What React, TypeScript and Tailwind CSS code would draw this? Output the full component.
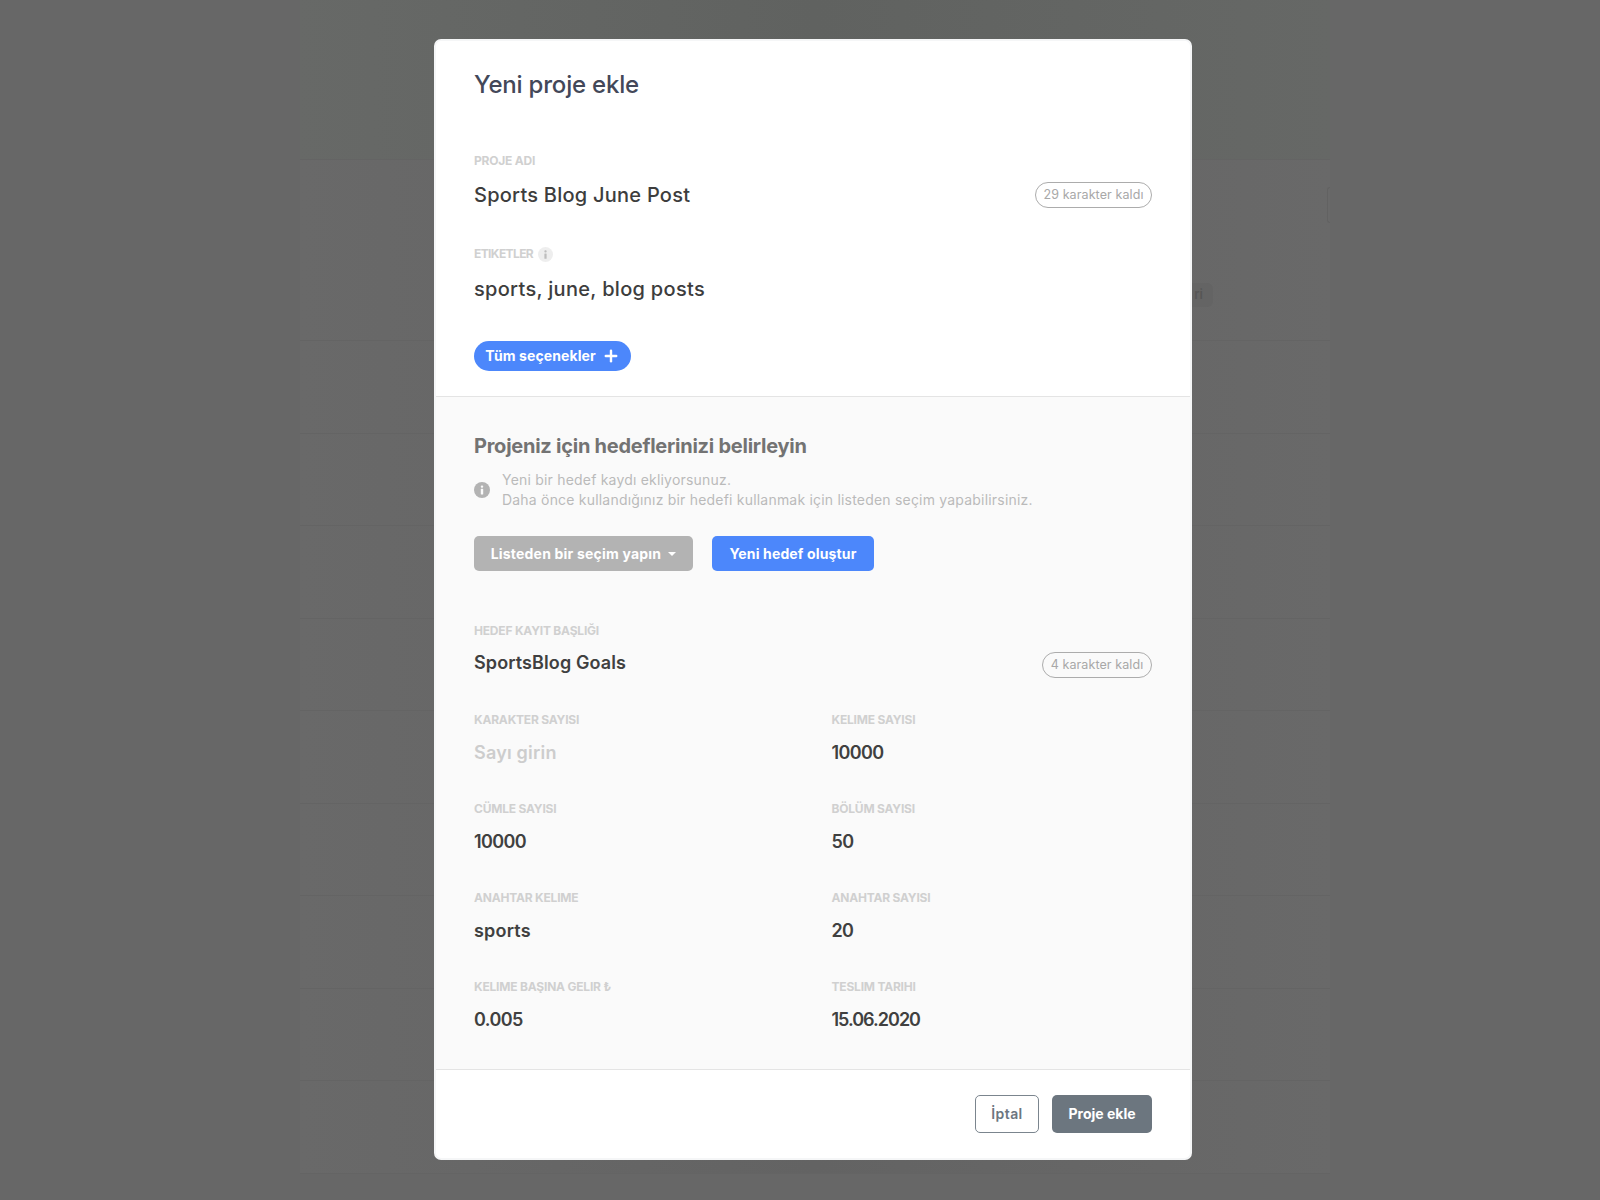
import { Plus } from "lucide-react";

const FONT = "font-['Inter','Noto_Sans',sans-serif]";
const LABEL = "h-4 text-[12px] leading-4 font-bold uppercase tracking-[-0.2px] text-[#d0d0d0]";
const VALUE = "h-[26px] text-[18px] leading-[26px] font-semibold text-[#404040]";

const GOALS = [
  { label: "Karakter sayısı", value: "Sayı girin", tone: "tracking-[0.2px] text-[#cdcdcd]" },
  { label: "Kelime sayısı", value: "10000", tone: "tracking-[-0.6px]" },
  { label: "Cümle sayısı", value: "10000", tone: "tracking-[-0.6px]" },
  { label: "Bölüm sayısı", value: "50", tone: "tracking-[-0.6px]" },
  { label: "Anahtar kelime", value: "sports", tone: "tracking-[0.2px]" },
  { label: "Anahtar sayısı", value: "20", tone: "tracking-[-0.6px]" },
  { label: "Kelime başına gelir ₺", value: "0.005", tone: "tracking-[-0.6px]" },
  { label: "Teslim tarihi", value: "15.06.2020", tone: "tracking-[-1px]" },
];

function InfoDot({ className, mark }: { className: string; mark: string }) {
  return (
    <svg viewBox="0 0 16 16" className={className}>
      <circle cx="8" cy="8" r="8" fill="currentColor" />
      <rect x="6.8" y="3.4" width="2.4" height="2.4" rx="1" fill={mark} />
      <rect x="6.8" y="6.8" width="2.4" height="5.8" rx="0.6" fill={mark} />
    </svg>
  );
}

function CharsLeft({ children, className }: { children: string; className: string }) {
  return (
    <span
      className={`flex h-[26px] items-center justify-center rounded-full border-[1.5px] border-[#acacac] text-[12.5px] tracking-[0.1px] whitespace-nowrap text-[#a8a8a8] ${className}`}
    >
      {children}
    </span>
  );
}

function PageBehind() {
  return (
    <div className="ml-[300px] w-[1030px]">
      <div className="h-[160px] border-b border-[#646464] bg-linear-to-r from-[#676967] via-[#606260] to-[#666866]" />
      <div className="bg-linear-to-r from-[#696969] via-[#636363] to-[#696969]">
        <div className="flex h-[181px] flex-col items-end border-b border-[#646464] pt-[27px]">
          <div className="h-[36px] w-[3px] rounded-l-md border-y border-l border-[#626262]" />
          <div className="mt-[60px] mr-[117px] flex h-[24px] w-[40px] items-center justify-end rounded-md bg-[#646464] pr-[10px] text-[13px] font-semibold text-[#565656]">
            ri
          </div>
        </div>
        {Array.from({ length: 9 }).map((_, i) => (
          <div key={i} className="h-[92.5px] border-b border-[#646464]" />
        ))}
      </div>
    </div>
  );
}

export default function App() {
  return (
    <div className={`relative h-[1200px] w-full overflow-hidden bg-[#676767] ${FONT}`}>
      <PageBehind />

      {/* modal */}
      <div className="absolute top-[39px] left-[434px] w-[758px] rounded-[7px] border-2 border-[#f5f6f7] bg-white">
        <section className="px-[38px] pt-[29px] pb-[25px]">
          <h2 className="h-[30px] text-[24px] leading-[30px] font-medium tracking-[-0.2px] text-[#434859]">
            Yeni proje ekle
          </h2>

          <div className={`mt-[53px] ${LABEL}`}>Proje adı</div>
          <div className="mt-[13px] flex items-center justify-between">
            <span className="text-[20px] leading-[26px] font-medium tracking-[0.24px] text-[#3d3d3d]">
              Sports Blog June Post
            </span>
            <CharsLeft className="w-[117px]">29 karakter kaldı</CharsLeft>
          </div>

          <div className={`mt-[38px] flex items-center gap-[5px] ${LABEL} tracking-[-0.6px]`}>
            Etiketler
            <InfoDot className="h-[15px] w-[15px] text-[#eeeeee]" mark="#bdbdbd" />
          </div>
          <div className="mt-[14px] text-[20px] leading-[26px] font-medium tracking-[0.3px] text-[#3d3d3d]">
            sports, june, blog posts
          </div>

          <button className="mt-[39px] flex h-[30px] w-[157px] items-center justify-center gap-[6px] rounded-full bg-[#4c87fb] pb-px text-[14px] font-bold tracking-[0.1px] text-white">
            Tüm seçenekler
            <Plus className="h-[18px] w-[18px]" strokeWidth={3.2} />
          </button>
        </section>

        <section className="border-y border-[#e4e4e4] bg-[#fafafa] px-[38px] pt-[34px] pb-[36px]">
          <h3 className="h-[30px] text-[20px] leading-[30px] font-bold tracking-[-0.25px] text-[#737373]">
            Projeniz için hedeflerinizi belirleyin
          </h3>

          <div className="mt-[9px] flex items-center gap-[12px]">
            <InfoDot className="h-4 w-4 text-[#b3b3b3]" mark="#fafafa" />
            <p className="text-[14px] leading-5 tracking-[0.2px] text-[#bababa]">
              Yeni bir hedef kaydı ekliyorsunuz.
              <br />
              Daha önce kullandığınız bir hedefi kullanmak için listeden seçim yapabilirsiniz.
            </p>
          </div>

          <div className="mt-[26px] flex gap-[19px]">
            <button className="flex h-[35px] w-[219px] items-center justify-center gap-[7px] rounded-[5px] bg-[#b3b3b3] text-[14px] font-bold tracking-[0.2px] text-white">
              Listeden bir seçim yapın
              <svg viewBox="0 0 8 4" className="h-1 w-2 fill-white">
                <path d="M0 0h8L4 4z" />
              </svg>
            </button>
            <button className="flex h-[35px] w-[162px] items-center justify-center rounded-[5px] bg-[#4c87fb] text-[14px] font-bold tracking-[0.15px] text-white">
              Yeni hedef oluştur
            </button>
          </div>

          <div className={`mt-[52px] ${LABEL}`}>Hedef kayıt başlığı</div>
          <div className="mt-[11px] flex items-start justify-between">
            <span className={`${VALUE} tracking-[0.1px]`}>SportsBlog Goals</span>
            <CharsLeft className="mt-[2px] w-[110px]">4 karakter kaldı</CharsLeft>
          </div>

          <div className="mt-[34px] grid grid-cols-[357.5px_1fr] gap-y-[35px]">
            {GOALS.map((g) => (
              <div key={g.label}>
                <div className={LABEL}>{g.label}</div>
                <div className={`mt-[12px] ${VALUE} ${g.tone}`}>{g.value}</div>
              </div>
            ))}
          </div>
        </section>

        <footer className="flex justify-end gap-[13px] px-[38px] py-[25px]">
          <button className="h-[38px] w-[64px] rounded-[5px] border-[1.5px] border-[#7b858e] bg-white pb-px text-[14px] font-semibold tracking-[0.4px] text-[#6c767f]">
            İptal
          </button>
          <button className="h-[38px] w-[100px] rounded-[5px] bg-[#6c767f] pb-px text-[14px] font-bold tracking-[0px] text-white">
            Proje ekle
          </button>
        </footer>
      </div>
    </div>
  );
}
